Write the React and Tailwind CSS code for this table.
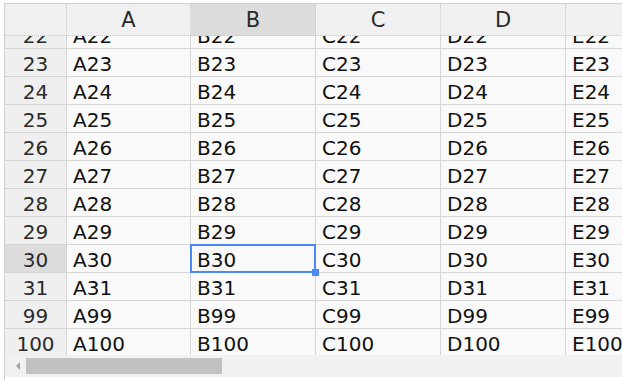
import React from "react";

const cols = ["A", "B", "C", "D", "E"];
const colWidths = ["w-[124px]", "w-[125px]", "w-[125px]", "w-[125px]", "w-[125px]"];
const rows = [22, 23, 24, 25, 26, 27, 28, 29, 30, 31, 99, 100];

export default function App() {
  const selRow = 30;
  const selCol = "B";

  return (
    <div
      className="w-[622px] h-[380px] bg-white overflow-hidden pt-[3px] pl-[4px]"
      style={{ fontFamily: '"DejaVu Sans", Verdana, sans-serif' }}
    >
      <div className="flex flex-col w-[618px] h-[377px] border-t border-l border-[#d0d0d0] overflow-hidden text-[20px] text-[#111]">
        {/* column header */}
        <div className="flex h-[32px] shrink-0 bg-[#f0f0f0] text-[21px]">
          <div className="w-[62px] shrink-0 border-r border-b border-dotted border-[#c8c8c8]" />
          {cols.map((c, i) => (
            <div
              key={c}
              className={`${colWidths[i]} shrink-0 flex items-center justify-center pt-[2px] border-r border-b border-dotted border-[#c8c8c8] text-[#2a2a2a] ${
                c === selCol ? "bg-[#dcdcdc]" : ""
              }`}
            >
              {c !== "E" ? c : ""}
            </div>
          ))}
        </div>

        {/* body */}
        <div className="h-[319px] shrink-0 overflow-hidden relative">
          <div className="-mt-[15px]">
            {rows.map((r) => (
              <div key={r} className="flex h-[28px]">
                <div
                  className={`w-[62px] shrink-0 flex items-center justify-center pt-[2px] border-r border-b border-[#d4d4d4] text-[#2a2a2a] ${
                    r === selRow ? "bg-[#dcdcdc]" : "bg-[#efefef]"
                  }`}
                >
                  {r}
                </div>
                {cols.map((c, i) => (
                  <div
                    key={c}
                    className={`${colWidths[i]} shrink-0 relative flex items-center pl-[6px] pt-[2px] bg-[#f9f9f9] border-r border-b border-[#d6d6d6]`}
                  >
                    {c}
                    {r}
                    {r === selRow && c === selCol && (
                      <>
                        <div className="absolute -left-px -top-px -right-px -bottom-px border-2 border-[#4a8af4] pointer-events-none" />
                        <div className="absolute -right-[4px] -bottom-[4px] w-[7px] h-[7px] bg-[#4a8af4] z-10" />
                      </>
                    )}
                  </div>
                ))}
              </div>
            ))}
          </div>
        </div>

        {/* horizontal scrollbar */}
        <div className="flex items-center h-[22px] shrink-0 bg-[#f1f1f1] pl-[9px]">
          <svg width="8" height="10" viewBox="0 0 8 10" className="shrink-0">
            <path d="M6 1 L2 5 L6 9 Z" fill="#a3a3a3" />
          </svg>
          <div className="ml-[4px] w-[196px] h-[16px] bg-[#c2c2c2]" />
        </div>
      </div>
    </div>
  );
}
